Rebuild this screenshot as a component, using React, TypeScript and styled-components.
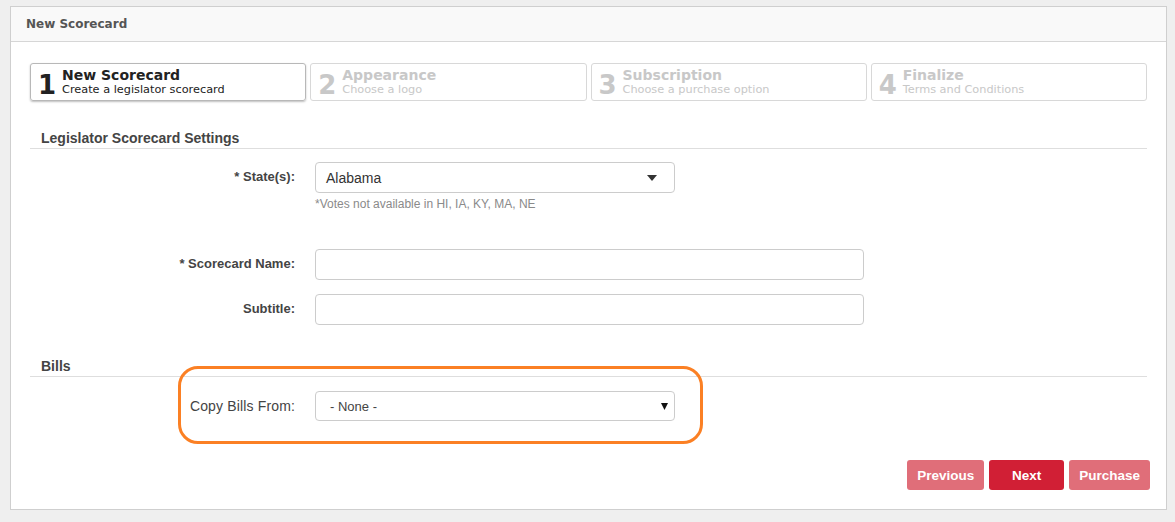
import * as React from 'react';
import styled, { createGlobalStyle, css } from 'styled-components';

const GlobalStyle = createGlobalStyle`
    html, body {
        margin: 0;
        padding: 0;
        background: #eeeeee;
    }
    * {
        box-sizing: border-box;
    }
`;

const Page = styled.div`
    padding: 6px 8px 10px 10px;
    width: 1175px;
    height: 522px;
    background: #efefef;
`;

const Panel = styled.div`
    width: 1157px;
    background: #fff;
    border: 1px solid #cfcfcf;
`;

const PanelHeader = styled.div`
    height: 35px;
    background: #f9f9f9;
    border-bottom: 1px solid #d6d6d6;
    padding: 0 15px;
    display: flex;
    align-items: center;
    font-family: 'DejaVu Sans', Verdana, sans-serif;
    font-weight: bold;
    font-size: 12px;
    color: #555;
`;

const PanelBody = styled.div`
    padding: 21px 19px 19px 19px;
    position: relative;
`;

const Steps = styled.div`
    display: grid;
    grid-template-columns: repeat(4, 1fr);
    gap: 4px;
`;

interface IStep {
    active?: boolean;
}

const Step = styled.div<IStep>`
    height: 38px;
    border: 1px solid #d8d8d8;
    border-radius: 3px;
    display: flex;
    align-items: center;
    padding-left: 7px;
    font-family: 'DejaVu Sans', Verdana, sans-serif;
    color: #c8c8c8;
    ${(p) => p.active && css`
        border-color: #b8b8b8;
        color: #222;
        box-shadow: 0 1px 2px rgba(0, 0, 0, 0.25);
    `}
`;

const StepNumber = styled.span`
    font-size: 26px;
    font-weight: bold;
    line-height: 1;
    width: 24px;
    margin-top: 5px;
`;

const StepText = styled.div`
    display: flex;
    flex-direction: column;
    line-height: 1;
    margin-top: -1px;
`;

const StepTitle = styled.span`
    font-size: 14px;
    font-weight: bold;
`;

const StepSub = styled.span`
    font-size: 11.3px;
    margin-top: 2px;
`;

interface ISection {
    top?: number;
}

const SectionTitle = styled.div<ISection>`
    margin-top: ${(p) => p.top ?? 29}px;
    padding: 0 11px 2px 11px;
    border-bottom: 1px solid #dedede;
    font-family: 'Liberation Sans', Arial, sans-serif;
    font-weight: bold;
    font-size: 14px;
    color: #444;
`;

interface IFormRow {
    gap?: number;
}

const FormRow = styled.div<IFormRow>`
    display: grid;
    grid-template-columns: 265px 1fr;
    column-gap: 20px;
    align-items: start;
    margin-top: ${(p) => p.gap ?? 14}px;
`;

interface ILabel {
    plain?: boolean;
}

const Label = styled.label<ILabel>`
    text-align: right;
    font-family: 'Liberation Sans', Arial, sans-serif;
    font-weight: bold;
    font-size: 13px;
    color: #444;
    line-height: 30px;
    ${(p) => p.plain && css`
        font-weight: normal;
        font-size: 14px;
        letter-spacing: 0.15px;
    `}
`;

const Field = styled.div`
    display: flex;
    flex-direction: column;
`;

interface IControl {
    w: number;
}

const SelectBox = styled.div<IControl>`
    width: ${(p) => p.w}px;
    height: 31px;
    border: 1px solid #cccccc;
    border-radius: 4px;
    display: flex;
    align-items: center;
    justify-content: space-between;
    padding: 0 17px 0 10px;
    font-family: 'Liberation Sans', Arial, sans-serif;
    font-size: 14px;
    color: #333;
    background: #fff;
`;

const PlainSelect = styled(SelectBox)`
    height: 30px;
    padding: 0 6px 0 14px;
    font-size: 13px;
    color: #444;
`;

const TextInput = styled.input<IControl>`
    width: ${(p) => p.w}px;
    height: 31px;
    border: 1px solid #cccccc;
    border-radius: 4px;
    outline: 0;
    padding: 0 10px;
    font-family: 'Liberation Sans', Arial, sans-serif;
    font-size: 14px;
`;

const HelpText = styled.div`
    margin-top: 4px;
    font-family: 'Liberation Sans', Arial, sans-serif;
    font-size: 12px;
    color: #8a8a8a;
`;

// annotation drawn over the "copy bills" row
const Highlight = styled.div`
    position: absolute;
    left: 167px;
    top: 324px;
    width: 525px;
    height: 78px;
    border: 3px solid #fb8024;
    border-radius: 20px;
    pointer-events: none;
`;

const Footer = styled.div`
    margin-top: 39px;
    margin-right: -3px;
    display: flex;
    justify-content: flex-end;
    gap: 5px;
`;

interface IButton {
    kind?: 'primary' | 'faded';
}

const Button = styled.button<IButton>`
    height: 30px;
    min-width: 75px;
    border: 0;
    border-radius: 3px;
    font-family: 'Liberation Sans', Arial, sans-serif;
    font-weight: bold;
    font-size: 13.5px;
    color: #fff;
    padding: 0 10px;
    background: ${(p) => (p.kind === 'primary' ? '#d11f35' : '#e06e79')};
`;

const Caret = ({ size = 10 }: { size?: number }) => (
    <svg width={size} height={size * 0.6} viewBox="0 0 10 6">
        <path d="M0 0 L10 0 L5 6 Z" fill="#333" />
    </svg>
);

const SmallCaret = () => (
    <svg width="7" height="9" viewBox="0 0 7 9">
        <path d="M0 1 L7 1 L3.5 8 Z" fill="#111" />
    </svg>
);

const steps = [
    { n: 1, title: 'New Scorecard', sub: 'Create a legislator scorecard' },
    { n: 2, title: 'Appearance', sub: 'Choose a logo' },
    { n: 3, title: 'Subscription', sub: 'Choose a purchase option' },
    { n: 4, title: 'Finalize', sub: 'Terms and Conditions' },
];

export default function App() {
    return (
        <Page>
            <GlobalStyle />
            <Panel>
                <PanelHeader>New Scorecard</PanelHeader>
                <PanelBody>
                    <Steps>
                        {steps.map((s) => (
                            <Step key={s.n} active={s.n === 1}>
                                <StepNumber>{s.n}</StepNumber>
                                <StepText>
                                    <StepTitle>{s.title}</StepTitle>
                                    <StepSub>{s.sub}</StepSub>
                                </StepText>
                            </Step>
                        ))}
                    </Steps>

                    <SectionTitle>Legislator Scorecard Settings</SectionTitle>
                    <FormRow gap={13}>
                        <Label>* State(s):</Label>
                        <Field>
                            <SelectBox w={360}>
                                <span>Alabama</span>
                                <Caret size={10} />
                            </SelectBox>
                            <HelpText>*Votes not available in HI, IA, KY, MA, NE</HelpText>
                        </Field>
                    </FormRow>
                    <FormRow gap={38}>
                        <Label>* Scorecard Name:</Label>
                        <TextInput w={549} />
                    </FormRow>
                    <FormRow gap={14}>
                        <Label>Subtitle:</Label>
                        <TextInput w={549} />
                    </FormRow>

                    <SectionTitle top={33}>Bills</SectionTitle>
                    <FormRow gap={14}>
                        <Label plain>Copy Bills From:</Label>
                        <PlainSelect w={360}>
                            <span>- None -</span>
                            <SmallCaret />
                        </PlainSelect>
                    </FormRow>
                    <Highlight />

                    <Footer>
                        <Button kind="faded">Previous</Button>
                        <Button kind="primary">Next</Button>
                        <Button kind="faded">Purchase</Button>
                    </Footer>
                </PanelBody>
            </Panel>
        </Page>
    );
}
